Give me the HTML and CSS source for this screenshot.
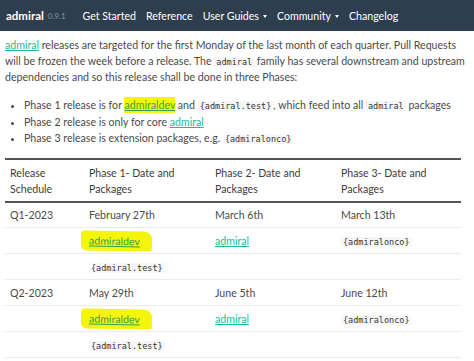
FILE: index.html
```html
<!DOCTYPE html>
<html lang="en">

<head>
    <meta charset="UTF-8">
    <meta name="viewport" content="width=device-width, initial-scale=1.0">
    <title>Release Strategy</title>
    <link rel="stylesheet" href="styles.css">
</head>

<body>
    <nav class="navbar">
        <span class="brand">admiral</span>
        <span class="version">0.9.1</span>
        <a class="nav-link" href="#">Get Started</a>
        <a class="nav-link" href="#">Reference</a>
        <a class="nav-link dropdown" href="#">User Guides</a>
        <a class="nav-link dropdown" href="#">Community</a>
        <a class="nav-link" href="#">Changelog</a>
    </nav>

    <div class="content">
        <p><a href="#">admiral</a> releases are targeted for the first Monday of the last month of each quarter. Pull Requests
            will be frozen the week before a release. The <code>admiral</code> family has several downstream and upstream
            dependencies and so this release shall be done in three Phases:</p>

        <ul>
            <li>Phase 1 release is for <mark class="hl-inline"><a href="#">admiraldev</a></mark> and <code>{admiral.test}</code>, which feed into all <code>admiral</code> packages</li>
            <li>Phase 2 release is only for core <a href="#">admiral</a></li>
            <li>Phase 3 release is extension packages, e.g. <code>{admiralonco}</code></li>
        </ul>

        <table class="schedule">
            <thead>
                <tr>
                    <th>Release Schedule</th>
                    <th>Phase 1- Date and Packages</th>
                    <th>Phase 2- Date and Packages</th>
                    <th>Phase 3- Date and Packages</th>
                </tr>
            </thead>
            <tbody>
                <tr>
                    <td>Q1-2023</td>
                    <td>February 27th</td>
                    <td>March 6th</td>
                    <td>March 13th</td>
                </tr>
                <tr>
                    <td></td>
                    <td><mark class="hl-brush"><a href="#">admiraldev</a></mark></td>
                    <td><a href="#">admiral</a></td>
                    <td><code>{admiralonco}</code></td>
                </tr>
                <tr>
                    <td></td>
                    <td><code>{admiral.test}</code></td>
                    <td></td>
                    <td></td>
                </tr>
                <tr>
                    <td>Q2-2023</td>
                    <td>May 29th</td>
                    <td>June 5th</td>
                    <td>June 12th</td>
                </tr>
                <tr>
                    <td></td>
                    <td><mark class="hl-brush"><a href="#">admiraldev</a></mark></td>
                    <td><a href="#">admiral</a></td>
                    <td><code>{admiralonco}</code></td>
                </tr>
                <tr>
                    <td></td>
                    <td><code>{admiral.test}</code></td>
                    <td></td>
                    <td></td>
                </tr>
            </tbody>
        </table>
    </div>
</body>

</html>
```

FILE: styles.css
```css
* {
    box-sizing: border-box;
}

body {
    margin: 0;
    background-color: #fff;
    font-family: Lato, "Open Sans", sans-serif;
    font-size: 10.6px;
    color: #4a4a4a;
}

.navbar {
    height: 31px;
    background-color: #2d3e4f;
    display: flex;
    align-items: center;
    padding: 0 6px;
}

.brand {
    color: #fff;
    font-size: 11.5px;
    font-weight: bold;
}

.version {
    color: #8c97a2;
    font-size: 8px;
    margin-left: 4px;
    margin-right: 17px;
}

.nav-link {
    color: #fff;
    text-decoration: none;
    font-size: 10.6px;
    margin-right: 10px;
}

.dropdown::after {
    content: "";
    display: inline-block;
    margin-left: 4px;
    vertical-align: 2px;
    border-top: 3px solid #fff;
    border-left: 2.5px solid transparent;
    border-right: 2.5px solid transparent;
}

.content {
    padding: 7px 4px 0 5px;
}

p {
    margin: 0 0 11px 0;
    line-height: 15.5px;
}

a {
    color: #18bc9c;
    text-decoration: underline;
}

code {
    font-family: "DejaVu Sans Mono", "Liberation Mono", monospace;
    font-size: 8.5px;
    color: #333;
    background-color: #f7f7f7;
    padding: 0 2px;
}

ul {
    margin: 0 0 11px 0;
    padding-left: 19px;
}

li {
    line-height: 16px;
}

.hl-inline {
    background-color: #f4f50a;
    padding: 2px 0;
}

.hl-inline a {
    color: #3aa24b;
}

.hl-brush {
    display: inline-block;
    background-color: #f4f50a;
    padding: 4px 12px 4px 8px;
    margin-left: -8px;
    border-radius: 3px 8px 2px 6px;
    transform: rotate(1deg);
}

.hl-brush a {
    color: #3aa24b;
}

.schedule {
    width: 456px;
    border-collapse: collapse;
    border-top: 2px solid #555;
}

.schedule th {
    text-align: left;
    font-weight: normal;
    color: #3c3c3c;
    line-height: 16px;
    padding: 5px 5px 4px 5px;
    border-bottom: 2px solid #555;
    vertical-align: top;
}

.schedule th:nth-child(1) {
    width: 79px;
}

.schedule th:nth-child(2),
.schedule th:nth-child(3) {
    width: 126px;
}

.schedule td {
    height: 26px;
    padding: 0 5px;
    border-bottom: 1px solid #e9ecef;
    vertical-align: middle;
}
```
